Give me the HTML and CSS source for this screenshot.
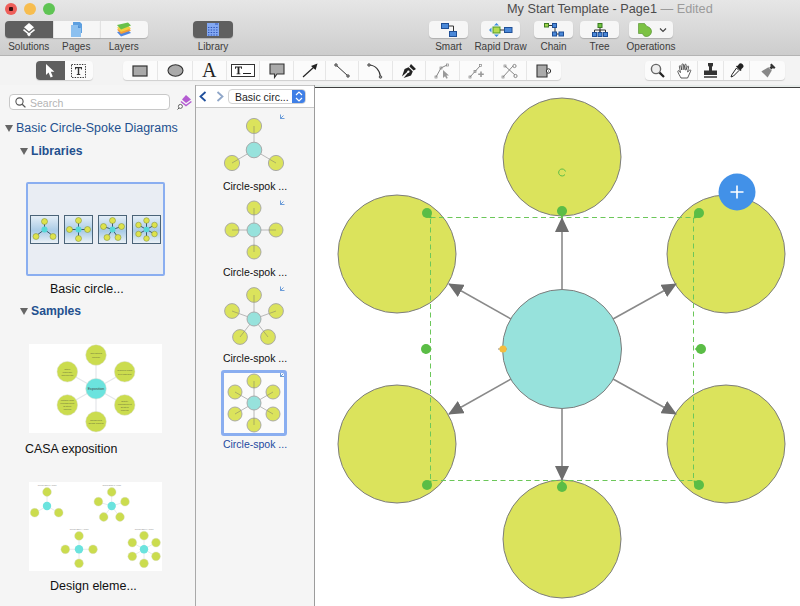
FILE: index.html
```html
<!DOCTYPE html>
<html lang="en">
<head>
    <meta charset="UTF-8">
    <title>My Start Template - Page1</title>
    <link rel="stylesheet" href="styles.css">
</head>
<body>
    <svg class="defs" width="0" height="0">
        <defs>
            <g id="thumb-3">
                <path class="spoke" d="M0 0V-24M0 0L-22 13M0 0L22 13"/>
                <circle class="leaf" cx="0" cy="-24" r="7.6"/><circle class="leaf" cx="-22" cy="13" r="7.6"/><circle class="leaf" cx="22" cy="13" r="7.6"/>
                <path class="tick" d="M0 -17V-24M-16 9.5L-22 13M16 9.5L22 13"/>
                <circle class="hub" r="7.8"/>
            </g>
            <g id="thumb-4">
                <path class="spoke" d="M0 0V-22M0 0H-22M0 0H22M0 0V22"/>
                <circle class="leaf" cx="0" cy="-22" r="7"/><circle class="leaf" cx="-22" cy="0" r="7"/><circle class="leaf" cx="22" cy="0" r="7"/><circle class="leaf" cx="0" cy="22" r="7"/>
                <path class="tick" d="M0 -15V-22M-15 0H-22M15 0H22M0 15V22"/>
                <circle class="hub" r="7"/>
            </g>
            <g id="thumb-5">
                <path class="spoke" d="M0 0V-24M0 0L-22 -8M0 0L22 -8M0 0L-14 18M0 0L14 18"/>
                <circle class="leaf" cx="0" cy="-24" r="7.4"/><circle class="leaf" cx="-22" cy="-8" r="7.4"/><circle class="leaf" cx="22" cy="-8" r="7.4"/><circle class="leaf" cx="-14" cy="18" r="7.4"/><circle class="leaf" cx="14" cy="18" r="7.4"/>
                <path class="tick" d="M0 -17V-24M-15.5 -5.6L-22 -8M15.5 -5.6L22 -8M-9.5 12.2L-14 18M9.5 12.2L14 18"/>
                <circle class="hub" r="7"/>
            </g>
            <g id="thumb-6">
                <path class="spoke" d="M0 0V-22M0 0L-19 -11M0 0L19 -11M0 0L-19 11M0 0L19 11M0 0V22"/>
                <circle class="leaf" cx="0" cy="-22" r="7"/><circle class="leaf" cx="-19" cy="-11" r="7"/><circle class="leaf" cx="19" cy="-11" r="7"/><circle class="leaf" cx="-19" cy="11" r="7"/><circle class="leaf" cx="19" cy="11" r="7"/><circle class="leaf" cx="0" cy="22" r="7"/>
                <path class="tick" d="M0 -15V-22M-13 -7.5L-19 -11M13 -7.5L19 -11M-13 7.5L-19 11M13 7.5L19 11M0 15V22"/>
                <circle class="hub" r="7"/>
            </g>
            <g id="mini-3">
                <path class="mini-spoke" d="M0 0V-14M0 0L-12 7M0 0L12 7"/>
                <circle class="mini-leaf" cx="0" cy="-14" r="4.4"/><circle class="mini-leaf" cx="-12.3" cy="6.7" r="4.4"/><circle class="mini-leaf" cx="11.7" cy="6.7" r="4.4"/>
                <circle class="mini-hub" r="4.2"/>
            </g>
            <g id="mini-4">
                <path class="mini-spoke" d="M0 0V-13M0 0H-13M0 0H14M0 0V14"/>
                <circle class="mini-leaf" cx="0" cy="-13.4" r="4.4"/><circle class="mini-leaf" cx="-13.7" cy="0" r="4.4"/><circle class="mini-leaf" cx="14" cy="0" r="4.4"/><circle class="mini-leaf" cx="0" cy="14" r="4.4"/>
                <circle class="mini-hub" r="4.2"/>
            </g>
            <g id="mini-5">
                <path class="mini-spoke" d="M0 0V-14M0 0L-13 -4M0 0L13 -4M0 0L-8 11M0 0L8 11"/>
                <circle class="mini-leaf" cx="0" cy="-14" r="4.4"/><circle class="mini-leaf" cx="-13.3" cy="-4.3" r="4.4"/><circle class="mini-leaf" cx="13.3" cy="-4.3" r="4.4"/><circle class="mini-leaf" cx="-8" cy="11" r="4.4"/><circle class="mini-leaf" cx="8.3" cy="11" r="4.4"/>
                <circle class="mini-hub" r="4.2"/>
            </g>
            <g id="mini-6">
                <path class="mini-spoke" d="M0 0V-14M0 0L-12 -7M0 0L12 -7M0 0L-12 7M0 0L12 7M0 0V14"/>
                <circle class="mini-leaf" cx="0" cy="-13.7" r="4.4"/><circle class="mini-leaf" cx="-11.7" cy="-6.7" r="4.4"/><circle class="mini-leaf" cx="12" cy="-6.7" r="4.4"/><circle class="mini-leaf" cx="-11.7" cy="7" r="4.4"/><circle class="mini-leaf" cx="12" cy="7" r="4.4"/><circle class="mini-leaf" cx="0" cy="14" r="4.4"/>
                <circle class="mini-hub" r="4.2"/>
            </g>
            <path id="corner-mark" class="corner" d="M26.5 -30.5V-26.5H30.5M26.5 -26.5L29.5 -29.5"/>
            <linearGradient id="tile-bg" x1="0" y1="0" x2="0" y2="1">
                <stop offset="0" stop-color="#e6eff7"/>
                <stop offset="0.55" stop-color="#a9cbe6"/>
                <stop offset="1" stop-color="#eef3f7"/>
            </linearGradient>
        </defs>
    </svg>

    <header class="toolbar">
        <div class="title-row">
            <div class="lights">
                <span class="light light-red"></span>
                <span class="light light-yellow"></span>
                <span class="light light-green"></span>
            </div>
            <div class="title">My Start Template - Page1 <span class="edited">— Edited</span></div>
        </div>
        <div class="tb-row">
            <div class="tb-item tb-first">
                <div class="tb-btn seg-left active">
                    <svg width="16" height="14" viewBox="0 0 16 14"><path fill="#fff" d="M8 0L13 4.2L8 8.4L3 4.2Z"/><path fill="none" stroke="#fff" stroke-width="1.6" d="M2.5 6.6L8 11L13.5 6.6"/><path fill="#fff" d="M6 11.6L8 13.4L10 11.6L8 10.2Z"/></svg>
                </div>
                <span class="tb-label">Solutions</span>
            </div>
            <div class="tb-item">
                <div class="tb-btn seg-mid">
                    <svg width="14" height="16" viewBox="0 0 14 16"><path fill="#5c9fe0" d="M3 0H10L12 2V11H3Z"/><path fill="#8cc0ef" d="M1 3H8L11 6V15H1Z"/><path fill="#4d8fd4" d="M8 3V6H11Z"/></svg>
                </div>
                <span class="tb-label">Pages</span>
            </div>
            <div class="tb-item">
                <div class="tb-btn seg-right">
                    <svg width="16" height="15" viewBox="0 0 16 15"><path fill="#4f86e0" d="M1 10L12 8L15 11L5 14.5Z"/><path fill="#f39c38" d="M1 7.5L12 5.5L15 8.5L5 12Z"/><path fill="#f2cf3e" d="M1 5.5L12 3.5L15 6.5L5 10Z"/><path fill="#67c04a" d="M1 3L12 .5L15 3.5L5 7.5Z"/></svg>
                </div>
                <span class="tb-label">Layers</span>
            </div>
            <div class="tb-item tb-library">
                <div class="tb-btn active">
                    <svg width="12" height="13" viewBox="0 0 12 13"><rect width="12" height="13" fill="#83a8f2"/><path fill="none" stroke="#2f55b8" stroke-width="1" stroke-dasharray="1.4 1.3" d="M1 4.5H11M1 7H11M1 9.5H11M1 12H11"/><path stroke="#2f55b8" stroke-width="1" d="M8 1H11"/></svg>
                </div>
                <span class="tb-label">Library</span>
            </div>
            <div class="tb-item tb-action tb-smart">
                <div class="tb-btn">
                    <svg width="16" height="14" viewBox="0 0 16 14"><path fill="none" stroke="#333" d="M7 3H12.5V9"/><rect x=".5" y=".5" width="7" height="5" fill="#4a88d8" stroke="#1f4f96"/><rect x="8.5" y="8.5" width="7" height="5" fill="#4a88d8" stroke="#1f4f96"/></svg>
                </div>
                <span class="tb-label">Smart</span>
            </div>
            <div class="tb-item tb-action tb-gap-13">
                <div class="tb-btn">
                    <svg width="24" height="14" viewBox="0 0 24 14"><path fill="#3d8ee0" d="M7.5 0L10 2.5H5ZM7.5 14L5 11.5H10ZM0 7L2.5 4.5V9.5Z"/><rect x="4" y="4" width="7" height="6" fill="#b5dc50" stroke="#4f9a2c"/><path stroke="#333" d="M11 7H15"/><rect x="15.5" y="4.5" width="7.5" height="5" fill="#4a88d8" stroke="#1f4f96"/></svg>
                </div>
                <span class="tb-label">Rapid Draw</span>
            </div>
            <div class="tb-item tb-action tb-gap-14">
                <div class="tb-btn">
                    <svg width="20" height="14" viewBox="0 0 20 14"><path fill="none" stroke="#333" d="M4 2.5H11V11H16"/><rect x=".5" y=".5" width="4" height="3.5" fill="#9fd44a" stroke="#3d7a22"/><rect x="8.5" y=".5" width="4" height="4" fill="#4a88d8" stroke="#1f4f96"/><rect x="8.5" y="9" width="4" height="4" fill="#4a88d8" stroke="#1f4f96"/><rect x="15" y="9" width="4.5" height="4" fill="#4a88d8" stroke="#1f4f96"/></svg>
                </div>
                <span class="tb-label">Chain</span>
            </div>
            <div class="tb-item tb-action tb-gap-7">
                <div class="tb-btn">
                    <svg width="16" height="14" viewBox="0 0 16 14"><path fill="none" stroke="#333" d="M8 4V9M2.5 10V7H13.5V10M8 7V10"/><rect x="6" y=".5" width="4" height="4" fill="#6ec53f" stroke="#3d7a22"/><rect x=".5" y="9.5" width="4" height="4" fill="#4a88d8" stroke="#1f4f96"/><rect x="6" y="9.5" width="4" height="4" fill="#4a88d8" stroke="#1f4f96"/><rect x="11.5" y="9.5" width="4" height="4" fill="#4a88d8" stroke="#1f4f96"/></svg>
                </div>
                <span class="tb-label">Tree</span>
            </div>
            <div class="tb-item tb-operations">
                <div class="tb-btn">
                    <svg class="op-shape" width="14" height="14" viewBox="0 0 14 14"><path fill="#7cc243" stroke="#4f8c2a" stroke-width=".6" d="M.5 .5H6.5L9 3.5C12 4 13.8 6.5 13.5 9C13 12 10.5 13.8 8 13.5C6 13.3 5 12 4.5 10.5H.5Z"/></svg>
                    <svg width="8" height="6" viewBox="0 0 8 6"><path fill="none" stroke="#444" stroke-width="1.2" d="M1 1.5L4 4.5L7 1.5"/></svg>
                </div>
                <span class="tb-label">Operations</span>
            </div>
        </div>
    </header>

    <div class="tool-row">
        <div class="tool-seg select-seg">
            <div class="tool-btn tool-active">
                <svg width="11" height="14" viewBox="0 0 11 14"><path fill="#fff" d="M1 0V11L3.6 8.6L5.6 13.4L7.8 12.4L5.8 7.8H9.4Z"/></svg>
            </div>
            <div class="tool-btn">
                <svg width="15" height="14" viewBox="0 0 15 14"><rect x=".5" y=".5" width="14" height="13" fill="none" stroke="#333" stroke-dasharray="1.4 1.2"/><path fill="#333" d="M4 3H11V5.6H10.2L9.8 4.2H8.2V10H9.2V11H5.8V10H6.8V4.2H5.2L4.8 5.6H4Z"/></svg>
            </div>
        </div>
        <div class="tool-seg shape-seg">
            <div class="tool-btn tool-wide"><svg width="16" height="12" viewBox="0 0 16 12"><rect x="1" y="1" width="14" height="10" fill="#aaa" stroke="#333" stroke-width="1.2"/></svg></div>
            <div class="tool-btn tool-wide"><svg width="17" height="13" viewBox="0 0 17 13"><ellipse cx="8.5" cy="6.5" rx="7.5" ry="5.7" fill="#aaa" stroke="#333" stroke-width="1.1"/></svg></div>
            <div class="tool-btn"><span class="glyph-a">A</span></div>
            <div class="tool-btn"><svg width="24" height="13" viewBox="0 0 24 13"><rect x=".5" y=".5" width="23" height="12" fill="#fff" stroke="#333"/><path fill="#222" d="M4 2.5H11V5H10.4L10 3.6H8.4V9.4H9.4V10.2H5.6V9.4H6.6V3.6H5L4.6 5H4Z"/><path stroke="#222" d="M12 9.5H20"/></svg></div>
            <div class="tool-btn"><svg width="16" height="16" viewBox="0 0 16 16"><path fill="#aaa" stroke="#333" stroke-width="1.1" d="M1 1H15V11H8L5.5 14.5V11H1Z"/></svg></div>
            <div class="tool-btn tool-narrow"><svg width="16" height="15" viewBox="0 0 16 15"><path stroke="#222" stroke-width="1.2" d="M1 14L12 4"/><path fill="#222" d="M15.5 .5L13.6 7L9 3Z"/></svg></div>
            <div class="tool-btn tool-narrow"><svg width="16" height="15" viewBox="0 0 16 15"><path stroke="#333" d="M2 2L14 13"/><circle cx="2" cy="2" r="1.3" fill="#999" stroke="#333" stroke-width=".7"/><circle cx="14" cy="13" r="1.3" fill="#999" stroke="#333" stroke-width=".7"/></svg></div>
            <div class="tool-btn"><svg width="16" height="16" viewBox="0 0 16 16"><path fill="none" stroke="#333" stroke-width="1.1" d="M2 2C8 2 13 7 13.5 14"/><circle cx="2" cy="2" r="1.3" fill="#999" stroke="#333" stroke-width=".7"/><circle cx="13.5" cy="14" r="1.3" fill="#999" stroke="#333" stroke-width=".7"/></svg></div>
            <div class="tool-btn"><svg width="16" height="16" viewBox="0 0 16 16"><path fill="#222" d="M10 1L15 6L12.6 7.6L8.4 3.4ZM7.6 4.2L11.8 8.4L10 12.4L2.6 15L7 9.8A1.2 1.2 0 1 0 6.2 9L1 13.4L3.6 6Z"/></svg></div>
            <div class="tool-btn tool-dim"><svg width="17" height="16" viewBox="0 0 17 16"><path fill="none" stroke="#888" d="M2 14L7 5L13 2"/><rect x="1" y="13" width="2" height="2" fill="none" stroke="#888" stroke-width=".7"/><rect x="6" y="4" width="2" height="2" fill="none" stroke="#888" stroke-width=".7"/><rect x="12.5" y="1" width="2" height="2" fill="none" stroke="#888" stroke-width=".7"/><path fill="#999" d="M9 7V15L11 13.2L12.4 15.8L13.8 15L12.4 12.6H15Z"/></svg></div>
            <div class="tool-btn tool-dim"><svg width="17" height="16" viewBox="0 0 17 16"><path fill="none" stroke="#888" d="M2 14L12 3"/><rect x="1" y="13" width="2" height="2" fill="none" stroke="#888" stroke-width=".7"/><rect x="6" y="7.5" width="2" height="2" fill="none" stroke="#888" stroke-width=".7"/><rect x="11.5" y="1.5" width="2" height="2" fill="none" stroke="#888" stroke-width=".7"/><path stroke="#999" stroke-width="1.6" d="M13 8.5V14M10.2 11.2H15.8"/></svg></div>
            <div class="tool-btn tool-dim"><svg width="17" height="16" viewBox="0 0 17 16"><path fill="none" stroke="#888" d="M2 14L12 3M4 3L14 12"/><circle cx="13.5" cy="3" r="1.6" fill="none" stroke="#888"/><circle cx="14.5" cy="13" r="1.6" fill="none" stroke="#888"/><rect x="1" y="13" width="2" height="2" fill="none" stroke="#888" stroke-width=".7"/><rect x="3" y="2" width="2" height="2" fill="none" stroke="#888" stroke-width=".7"/></svg></div>
            <div class="tool-btn"><svg width="16" height="14" viewBox="0 0 16 14"><path fill="#aaa" stroke="#333" stroke-width="1.1" d="M1 1H11V13H1Z"/><circle cx="12.5" cy="7" r="2.2" fill="#fff" stroke="#333"/><circle cx="12.5" cy="7" r=".6" fill="#333"/></svg></div>
        </div>
        <div class="tool-seg view-seg">
            <div class="tool-btn view-btn-1"><svg width="15" height="15" viewBox="0 0 15 15"><circle cx="6" cy="6" r="4.6" fill="#eee" stroke="#666" stroke-width="1.4"/><path stroke="#222" stroke-width="2.2" d="M9.6 9.6L14 14"/></svg></div>
            <div class="tool-btn view-btn-2"><svg width="15" height="16" viewBox="0 0 15 16"><path fill="#fff" stroke="#333" stroke-width=".8" d="M4 15C3 13 1 10 .8 8.4C.8 7.4 2 7.4 2.8 8.6L3.4 9.6L2.4 3.4C2.4 2.4 3.6 2.4 3.9 3.4L4.8 7L5 1.6C5 .6 6.4 .6 6.5 1.6L6.9 6.8L7.8 1.8C8 1 9.2 1 9.2 2L8.8 7.2L10.4 3.4C10.8 2.6 11.8 3 11.6 3.8L10.6 9L12.6 7.2C13.4 6.6 14.2 7.4 13.6 8.2L10.6 15Z"/></svg></div>
            <div class="tool-btn view-btn-3"><svg width="15" height="15" viewBox="0 0 15 15"><path fill="#333" d="M5 0H10V2.5L9 4V7.5H14V12H1V7.5H6V4L5 2.5Z"/><rect x="1" y="13" width="13" height="2" fill="#666"/></svg></div>
            <div class="tool-btn view-btn-4"><svg width="14" height="15" viewBox="0 0 14 15"><path fill="#222" d="M9.2 .8C10 0 11.4 0 12.6 1.2C13.8 2.4 13.8 3.8 13 4.6L11 6.4L11.6 7L10.6 8L6 3.4L7 2.4L7.6 3Z"/><path fill="#fff" stroke="#222" d="M6.5 5L9 7.5L3.5 13L1 14L2 11.5Z"/></svg></div>
            <div class="tool-btn view-btn-5"><svg width="16" height="16" viewBox="0 0 16 16"><path fill="#333" d="M11.5 .5L15.5 4.5L14 6L13 5L11.4 6.6L9.4 4.6L11 3L10 2Z"/><path fill="#888" d="M8.4 4.2L11.8 7.6L7.6 14.6L1.4 8.4Z"/></svg></div>
        </div>
    </div>

    <main class="workspace">
        <aside class="library">
            <div class="search-row">
                <div class="search-box">
                    <svg width="11" height="11" viewBox="0 0 11 11"><circle cx="4.5" cy="4.5" r="3.6" fill="none" stroke="#555" stroke-width="1.1"/><path stroke="#555" stroke-width="1.3" d="M7.2 7.2L10.4 10.4"/></svg>
                    <span class="search-text">Search</span>
                </div>
                <svg class="search-logo" width="15" height="15" viewBox="0 0 15 15"><path fill="#b45cd2" d="M9 0L14 4.5L9 8L5 4.5Z"/><path fill="none" stroke="#b45cd2" stroke-width="1.5" d="M4 6.5L9 10.5L14.4 6.5"/><circle cx="3.4" cy="11.4" r="2" fill="#fff" stroke="#555" stroke-width=".9"/><path stroke="#555" d="M2 13L.5 14.5"/></svg>
            </div>
            <h1 class="tree-title"><span class="arrow"></span>Basic Circle-Spoke Diagrams</h1>
            <h2 class="tree-head"><span class="arrow"></span>Libraries</h2>
            <div class="lib-card">
                <div class="lib-tile"><svg width="29" height="29" viewBox="-14.5 -14.5 29 29"><rect x="-14" y="-14" width="28" height="28" fill="url(#tile-bg)" stroke="#4b6478"/><path stroke="#3c5a6c" d="M0 0V-9M0 0L-8 6M0 0L8 6"/><circle cy="-8" r="3" fill="#dde24c" stroke="#7c8a30" stroke-width=".5"/><circle cx="-8.5" cy="7" r="3" fill="#dde24c" stroke="#7c8a30" stroke-width=".5"/><circle cx="8.5" cy="7" r="3" fill="#dde24c" stroke="#7c8a30" stroke-width=".5"/><circle r="3" fill="#55d8d8"/></svg></div>
                <div class="lib-tile"><svg width="29" height="29" viewBox="-14.5 -14.5 29 29"><rect x="-14" y="-14" width="28" height="28" fill="url(#tile-bg)" stroke="#4b6478"/><path stroke="#3c5a6c" d="M0 -9V9M-9 0H9"/><circle cy="-9" r="3" fill="#dde24c" stroke="#7c8a30" stroke-width=".5"/><circle cx="-9" r="3" fill="#dde24c" stroke="#7c8a30" stroke-width=".5"/><circle cx="9" r="3" fill="#dde24c" stroke="#7c8a30" stroke-width=".5"/><circle cy="9" r="3" fill="#dde24c" stroke="#7c8a30" stroke-width=".5"/><circle r="3" fill="#55d8d8"/></svg></div>
                <div class="lib-tile"><svg width="29" height="29" viewBox="-14.5 -14.5 29 29"><rect x="-14" y="-14" width="28" height="28" fill="url(#tile-bg)" stroke="#4b6478"/><path stroke="#3c5a6c" d="M0 0V-9M0 0L-9 -3M0 0L9 -3M0 0L-5.5 8M0 0L5.5 8"/><circle cy="-9" r="3" fill="#dde24c" stroke="#7c8a30" stroke-width=".5"/><circle cx="-9" cy="-3" r="3" fill="#dde24c" stroke="#7c8a30" stroke-width=".5"/><circle cx="9" cy="-3" r="3" fill="#dde24c" stroke="#7c8a30" stroke-width=".5"/><circle cx="-5.5" cy="8" r="3" fill="#dde24c" stroke="#7c8a30" stroke-width=".5"/><circle cx="5.5" cy="8" r="3" fill="#dde24c" stroke="#7c8a30" stroke-width=".5"/><circle r="3" fill="#55d8d8"/></svg></div>
                <div class="lib-tile"><svg width="29" height="29" viewBox="-14.5 -14.5 29 29"><rect x="-14" y="-14" width="28" height="28" fill="url(#tile-bg)" stroke="#4b6478"/><path stroke="#3c5a6c" d="M0 -9V9M-8 -4.5L8 4.5M8 -4.5L-8 4.5"/><circle cy="-9" r="2.8" fill="#dde24c" stroke="#7c8a30" stroke-width=".5"/><circle cx="-8" cy="-4.5" r="2.8" fill="#dde24c" stroke="#7c8a30" stroke-width=".5"/><circle cx="8" cy="-4.5" r="2.8" fill="#dde24c" stroke="#7c8a30" stroke-width=".5"/><circle cx="-8" cy="4.5" r="2.8" fill="#dde24c" stroke="#7c8a30" stroke-width=".5"/><circle cx="8" cy="4.5" r="2.8" fill="#dde24c" stroke="#7c8a30" stroke-width=".5"/><circle cy="9" r="2.8" fill="#dde24c" stroke="#7c8a30" stroke-width=".5"/><circle r="2.8" fill="#55d8d8"/></svg></div>
            </div>
            <div class="card-label">Basic circle...</div>
            <h2 class="tree-head samples-head"><span class="arrow"></span>Samples</h2>
            <svg class="sample sample-casa" width="133" height="89" viewBox="0 0 133 89">
                <rect width="133" height="89" fill="#fff"/>
                <path stroke="#e4e6ea" stroke-width="1.2" d="M67 11V78M38 28L96 61M96 28L38 61"/>
                <circle class="casa-leaf" cx="67" cy="11" r="10.3"/>
                <circle class="casa-leaf" cx="38.3" cy="27.7" r="10.3"/>
                <circle class="casa-leaf" cx="95.7" cy="27.7" r="10.3"/>
                <circle class="casa-leaf" cx="38.3" cy="61" r="10.3"/>
                <circle class="casa-leaf" cx="95.7" cy="61" r="10.3"/>
                <circle class="casa-leaf" cx="67" cy="77.7" r="10.3"/>
                <circle class="casa-hub" cx="67" cy="44.7" r="10.3"/>
                <text class="casa-text" x="67" y="10">Operations</text><text class="casa-text" x="67" y="13.5">manual</text>
                <text class="casa-text" x="95.7" y="27">Training plans</text><text class="casa-text" x="95.7" y="30.5">&amp; syllabuses</text>
                <text class="casa-text" x="38.3" y="26">Other</text><text class="casa-text" x="38.3" y="29">manuals/</text><text class="casa-text" x="38.3" y="32">documents</text>
                <text class="casa-text" x="38.3" y="57">Fatigue Risk</text><text class="casa-text" x="38.3" y="60">Management</text><text class="casa-text" x="38.3" y="63">System</text><text class="casa-text" x="38.3" y="66">manual</text>
                <text class="casa-text" x="95.7" y="58">Safety</text><text class="casa-text" x="95.7" y="61">Management</text><text class="casa-text" x="95.7" y="64">System</text><text class="casa-text" x="95.7" y="67">manual</text>
                <text class="casa-text" x="67" y="76.5">Dangerous</text><text class="casa-text" x="67" y="80">goods manual</text>
                <text class="casa-main" x="67" y="46">Exposition</text>
            </svg>
            <div class="sample-label">CASA exposition</div>
            <svg class="sample sample-design" width="133" height="89" viewBox="0 0 133 89">
                <rect width="133" height="89" fill="#fff"/>
                <text class="mini-cap" x="18" y="4">Circular Basic 3 Arrows</text>
                <text class="mini-cap" x="82.7" y="4">Circular Basic 5 Arrows</text>
                <text class="mini-cap" x="50" y="47.5">Circular Basic 4 Arrows</text>
                <text class="mini-cap" x="115" y="47.5">Circular Basic 6 Arrows</text>
                <use href="#mini-3" x="18" y="24"/>
                <use href="#mini-5" x="82.7" y="24"/>
                <use href="#mini-4" x="50" y="67.3"/>
                <use href="#mini-6" x="115" y="67.3"/>
            </svg>
            <div class="card-label design-label">Design eleme...</div>
        </aside>

        <aside class="shapes">
            <div class="shapes-nav">
                <svg class="nav-arrow" width="8" height="11" viewBox="0 0 8 11"><path fill="none" stroke="#1f4f9c" stroke-width="1.8" d="M6.5 1L1.5 5.5L6.5 10"/></svg>
                <svg class="nav-arrow nav-next" width="8" height="11" viewBox="0 0 8 11"><path fill="none" stroke="#8fa6c8" stroke-width="1.8" d="M1.5 1L6.5 5.5L1.5 10"/></svg>
                <div class="lib-select">
                    <span class="select-text">Basic circ...</span>
                    <span class="select-stepper">
                        <svg width="8" height="11" viewBox="0 0 8 11"><path fill="none" stroke="#fff" stroke-width="1.2" d="M1 4L4 1L7 4M1 7L4 10L7 7"/></svg>
                    </span>
                </div>
            </div>
            <div class="shape-list">
                <div class="shape-item">
                    <div class="shape-thumb"><svg width="64" height="64" viewBox="-32 -32 64 64"><use href="#thumb-3" y="5"/><use href="#corner-mark"/></svg></div>
                    <div class="shape-label">Circle-spok ...</div>
                </div>
                <div class="shape-item">
                    <div class="shape-thumb"><svg width="64" height="64" viewBox="-32 -32 64 64"><use href="#thumb-4" y="-1"/><use href="#corner-mark"/></svg></div>
                    <div class="shape-label">Circle-spok ...</div>
                </div>
                <div class="shape-item">
                    <div class="shape-thumb"><svg width="64" height="64" viewBox="-32 -32 64 64"><use href="#thumb-5" y="2"/><use href="#corner-mark"/></svg></div>
                    <div class="shape-label">Circle-spok ...</div>
                </div>
                <div class="shape-item selected">
                    <div class="shape-thumb"><svg width="64" height="64" viewBox="-32 -32 64 64"><use href="#thumb-6"/><use href="#corner-mark"/></svg></div>
                    <div class="shape-label">Circle-spok ...</div>
                </div>
            </div>
        </aside>

        <section class="canvas">
            <div class="canvas-edge"></div>
            <svg width="485" height="518" viewBox="315 88 485 518">
                <defs>
                    <marker id="arrowhead" markerUnits="userSpaceOnUse" markerWidth="16" markerHeight="14" refX="14" refY="7" orient="auto">
                        <path d="M0 0L15 7L0 14Z" fill="#6e6e6e"/>
                    </marker>
                </defs>
                <circle class="node" cx="562" cy="157" r="59"/>
                <circle class="node" cx="397" cy="254" r="59"/>
                <circle class="node" cx="726" cy="254" r="59"/>
                <circle class="node" cx="397" cy="444" r="59"/>
                <circle class="node" cx="726" cy="444" r="59"/>
                <circle class="node" cx="562" cy="539" r="59"/>
                <path class="link" marker-end="url(#arrowhead)" d="M562 290V218"/>
                <path class="link" marker-end="url(#arrowhead)" d="M511 319L449 284"/>
                <path class="link" marker-end="url(#arrowhead)" d="M613 319L676 284"/>
                <path class="link" marker-end="url(#arrowhead)" d="M511 379L449 414"/>
                <path class="link" marker-end="url(#arrowhead)" d="M613 379L676 414"/>
                <path class="link" marker-end="url(#arrowhead)" d="M562 409V480"/>
                <circle class="hub-node" cx="562" cy="349" r="59.5"/>
                <rect class="selection" x="430.5" y="217.5" width="263" height="263"/>
                <circle class="handle" cx="427" cy="213" r="5"/>
                <circle class="handle" cx="562" cy="211" r="5"/>
                <circle class="handle" cx="699" cy="213" r="5"/>
                <circle class="handle" cx="426" cy="349" r="5"/>
                <circle class="handle" cx="701" cy="349" r="5"/>
                <circle class="handle" cx="427" cy="485" r="5"/>
                <circle class="handle" cx="562" cy="487" r="5"/>
                <circle class="handle" cx="699" cy="485" r="5"/>
                <path class="handle" d="M423.5 216.5L431.5 218.5L430.5 210ZM695 210L693.5 218.5L702 217ZM430.5 488.5L431.5 480.5L423.5 481.5ZM695 488.5L693.5 480.5L702.5 481.5ZM425 344L432 349L425 354ZM702 344L694.5 349L702 354ZM557 210L562 218L567 210ZM557 488L562 480L567 488Z"/>
                <path stroke="#888" stroke-width="1" d="M498 349H507"/>
                <circle class="handle-orange" cx="503" cy="349" r="3.6"/>
                <path class="rotate" d="M565.5 171.5A3.5 3.5 0 1 0 565 174.5"/>
                <circle class="add-btn" cx="737" cy="192" r="18.5"/>
                <path class="add-plus" d="M737 185.5V198.5M730.5 192H743.5"/>
            </svg>
        </section>
    </main>
</body>
</html>
```

FILE: styles.css
```css
* {
    box-sizing: border-box;
}
body {
    margin: 0;
    width: 800px;
    height: 606px;
    overflow: hidden;
    font-family: "Liberation Sans", Arial, sans-serif;
    background: #f5f5f5;
    color: #222;
    display: flex;
    flex-direction: column;
}
.defs {
    position: absolute;
}

/* title bar and big toolbar */
.toolbar {
    height: 56px;
    background: linear-gradient(#e6e6e6, #cdcdcd);
    border-bottom: 1px solid #b4b4b4;
    flex: none;
}
.title-row {
    height: 21px;
    display: flex;
    align-items: center;
    padding-bottom: 3px;
}
.lights {
    display: flex;
    gap: 7px;
    margin-left: 5px;
}
.light {
    width: 12px;
    height: 12px;
    border-radius: 50%;
}
.light-red {
    background: radial-gradient(circle, #3a1010 0 2px, #ee5f5a 2.5px);
}
.light-yellow {
    background: #f7bd4f;
}
.light-green {
    background: #5fc454;
}
.title {
    margin-left: 452px;
    font-size: 12.7px;
    color: #4c4c4c;
    white-space: nowrap;
}
.edited {
    color: #9b9b9b;
}
.tb-row {
    display: flex;
}
.tb-item {
    width: 47.5px;
    display: flex;
    flex-direction: column;
    align-items: center;
}
.tb-first {
    margin-left: 5px;
}
.tb-btn {
    width: 100%;
    height: 17px;
    background: #f6f6f6;
    border-radius: 4px;
    box-shadow: 0 1px 1px rgba(0, 0, 0, 0.18);
    display: flex;
    align-items: center;
    justify-content: center;
    gap: 7px;
}
.tb-btn.active {
    background: #5f5f5f;
}
.seg-left {
    border-radius: 4px 0 0 4px;
}
.seg-mid {
    border-radius: 0;
    border-left: 1px solid #e2e2e2;
}
.seg-right {
    border-radius: 0 4px 4px 0;
    border-left: 1px solid #e2e2e2;
}
.tb-label {
    margin-top: 2px;
    font-size: 10px;
    line-height: 13px;
    color: #3c3c3c;
    white-space: nowrap;
}
.tb-library {
    width: 40px;
    margin-left: 45.5px;
}
.tb-action {
    width: 39px;
}
.tb-smart {
    margin-left: 196px;
}
.tb-gap-13 {
    margin-left: 13px;
}
.tb-gap-14 {
    margin-left: 14px;
}
.tb-gap-7 {
    margin-left: 7px;
}
.tb-operations {
    width: 44px;
    margin-left: 10px;
}
.op-shape {
    margin-left: 3px;
}

/* drawing tools row */
.tool-row {
    height: 29px;
    flex: none;
    background: #f3f3f3;
    display: flex;
    align-items: center;
    padding-left: 36px;
}
.tool-seg {
    height: 19px;
    display: flex;
    background: #fbfbfb;
    border-radius: 4px;
    box-shadow: 0 1px 1px rgba(0, 0, 0, 0.15);
}
.tool-btn {
    width: 33.7px;
    flex: none;
    display: flex;
    align-items: center;
    justify-content: center;
    border-right: 1px solid #e6e6e6;
}
.tool-btn:last-child {
    border-right: none;
}
.tool-wide {
    width: 35px;
}
.tool-narrow {
    width: 32.4px;
}
.select-seg {
    width: 57px;
}
.select-seg .tool-btn {
    width: 28.5px;
    border-right: none;
}
.tool-active {
    background: #5f5f5f;
    border-radius: 4px 0 0 4px;
}
.shape-seg {
    margin-left: 30px;
}
.glyph-a {
    font-family: "Liberation Serif", serif;
    font-size: 20px;
    line-height: 19px;
    color: #222;
}
.view-seg {
    margin-left: 84px;
}
.view-btn-1,
.view-btn-2,
.view-btn-3 {
    width: 26.5px;
}
.view-btn-4 {
    width: 26px;
}
.view-btn-5 {
    width: 35px;
}

/* main area */
.workspace {
    flex: 1;
    display: flex;
    min-height: 0;
}
.library {
    width: 196px;
    flex: none;
    background: #f5f5f5;
    border-right: 1px solid #a9a9a9;
    padding-top: 9px;
    overflow: hidden;
}
.search-row {
    display: flex;
    align-items: center;
    margin-left: 9px;
}
.search-box {
    width: 161px;
    height: 16px;
    background: #fff;
    border: 1px solid #c8c8c8;
    border-radius: 4px;
    display: flex;
    align-items: center;
    gap: 4px;
    padding-left: 5px;
}
.search-text {
    font-size: 10.5px;
    line-height: 14px;
    padding-top: 1px;
    color: #b4b4b4;
}
.search-logo {
    margin-left: 7px;
}
.arrow {
    display: inline-block;
    width: 0;
    height: 0;
    border-left: 4px solid transparent;
    border-right: 4px solid transparent;
    border-top: 7px solid #666;
}
.tree-title {
    margin: 10px 0 0 5px;
    font-size: 12.45px;
    font-weight: normal;
    line-height: 16px;
    color: #23508f;
    white-space: nowrap;
    display: flex;
    align-items: center;
    gap: 3px;
}
.tree-head {
    margin: 7px 0 0 20px;
    font-size: 12.2px;
    font-weight: bold;
    line-height: 16px;
    color: #23508f;
    display: flex;
    align-items: center;
    gap: 3px;
}
.lib-card {
    width: 139px;
    height: 94px;
    margin: 23px 0 0 26px;
    background: #e9edf3;
    border: 2px solid #8aaef0;
    border-radius: 2px;
    display: flex;
    align-items: center;
    justify-content: center;
    gap: 5px;
}
.lib-tile {
    width: 29px;
    height: 29px;
    flex: none;
    display: flex;
}
.card-label {
    margin: 6px 0 0 50px;
    font-size: 12.5px;
    line-height: 15px;
    color: #111;
}
.samples-head {
    margin-top: 6px;
}
.sample {
    display: block;
    margin-left: 29px;
}
.sample-casa {
    margin-top: 25px;
}
.sample-label {
    margin: 9px 0 0 25px;
    font-size: 12.4px;
    line-height: 15px;
    color: #111;
}
.sample-design {
    margin-top: 25px;
}
.design-label {
    margin-top: 8px;
}
.casa-leaf {
    fill: #cbdc4e;
    stroke: #d9dccf;
    stroke-width: 0.5;
}
.casa-hub {
    fill: #6be3de;
    stroke: #d9dccf;
    stroke-width: 0.5;
}
.casa-text {
    font-size: 2.4px;
    fill: #6a6f3c;
    text-anchor: middle;
}
.casa-main {
    font-size: 3.6px;
    fill: #444;
    text-anchor: middle;
}
.mini-spoke {
    stroke: #e2e4e8;
    stroke-width: 0.8;
}
.mini-leaf {
    fill: #cbdc4e;
    stroke: #d9dccf;
    stroke-width: 0.4;
}
.mini-hub {
    fill: #6be3de;
}
.mini-cap {
    font-size: 1.8px;
    fill: #888;
    text-anchor: middle;
}

/* shape list */
.shapes {
    width: 119px;
    flex: none;
    background: #f5f5f5;
    border-right: 1px solid #9c9c9c;
    overflow: hidden;
}
.shapes-nav {
    height: 23px;
    background: #fff;
    border-top: 1px solid #c4c4c4;
    border-bottom: 1px solid #c9c9c9;
    display: flex;
    align-items: center;
    padding-left: 3px;
}
.nav-next {
    margin-left: 9px;
}
.lib-select {
    width: 78px;
    height: 15px;
    margin-left: 4px;
    background: #fff;
    border: 1px solid #d2d2d2;
    border-radius: 4px;
    display: flex;
    align-items: center;
    justify-content: space-between;
    overflow: hidden;
}
.select-text {
    font-size: 10.5px;
    padding-left: 6px;
    color: #222;
}
.select-stepper {
    width: 13px;
    height: 100%;
    background: #3f7fe6;
    display: flex;
    align-items: center;
    justify-content: center;
}
.shape-list {
    padding-top: 5px;
    display: flex;
    flex-direction: column;
    align-items: center;
    gap: 6px;
}
.shape-item {
    display: flex;
    flex-direction: column;
    align-items: center;
    margin-left: -2px;
}
.shape-thumb {
    width: 64px;
    height: 64px;
    display: flex;
}
.shape-label {
    margin-top: 2px;
    margin-left: 2px;
    font-size: 10.5px;
    line-height: 14px;
    color: #111;
    white-space: nowrap;
}
.selected .shape-thumb {
    outline: 3px solid #8aaef0;
    outline-offset: -2px;
    border-radius: 2px;
    background: #fbfbfb;
}
.selected .shape-label {
    color: #1d4aa0;
}
.spoke {
    stroke: #a8a8a8;
    stroke-width: 0.8;
    fill: none;
}
.leaf {
    fill: #dbe35c;
    stroke: #a4a4a4;
    stroke-width: 0.9;
}
.hub {
    fill: #97e2dc;
    stroke: #a4a4a4;
    stroke-width: 0.9;
}
.tick {
    stroke: #8a8a6a;
    stroke-width: 0.6;
    fill: none;
}
.corner {
    stroke: #4a86d0;
    stroke-width: 0.8;
    fill: none;
}

/* drawing canvas */
.canvas {
    flex: 1;
    background: #fff;
    overflow: hidden;
}
.canvas-edge {
    height: 3px;
    background: #e6ebe9;
    border-bottom: 1px solid #3f3f3f;
}
.canvas svg {
    display: block;
}
.node {
    fill: #dbe35c;
    stroke: #7d7d7d;
    stroke-width: 1;
}
.hub-node {
    fill: #97e2dc;
    stroke: #7d7d7d;
    stroke-width: 1;
}
.link {
    stroke: #8a8a8a;
    stroke-width: 1.6;
    fill: none;
}
.selection {
    fill: none;
    stroke: #6cc75a;
    stroke-width: 1;
    stroke-dasharray: 5 3.5;
}
.handle {
    fill: #5bbd46;
}
.handle-orange {
    fill: #f5bd3d;
}
.rotate {
    fill: none;
    stroke: #5bbd46;
    stroke-width: 1;
}
.add-btn {
    fill: #4291e8;
}
.add-plus {
    stroke: #fff;
    stroke-width: 1.6;
}
```
